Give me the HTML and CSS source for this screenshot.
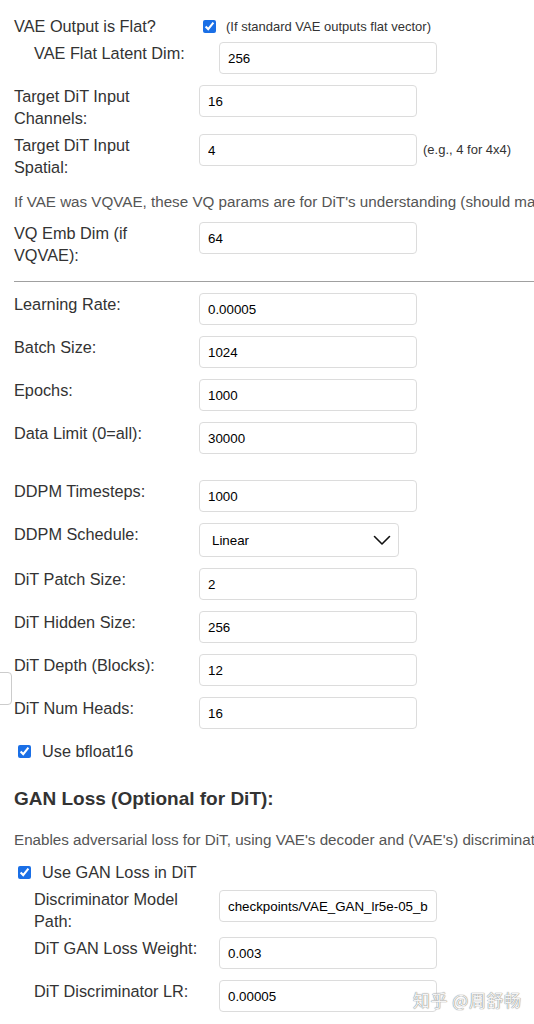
FILE: index.html
```html
<!DOCTYPE html>
<html>
<head>
<meta charset="utf-8">
<link rel="stylesheet" href="styles.css">
</head>
<body>
<div class="page">
  <div class="row check-row-top">
    <label class="lbl">VAE Output is Flat?</label>
    <div class="ctrl inline">
      <input type="checkbox" checked>
      <span class="note">(If standard VAE outputs flat vector)</span>
    </div>
  </div>
  <div class="indent">
    <div class="row">
      <label class="lbl">VAE Flat Latent Dim:</label>
      <input class="field" type="text" value="256">
    </div>
  </div>
  <div class="row">
    <label class="lbl">Target DiT Input Channels:</label>
    <input class="field" type="text" value="16">
  </div>
  <div class="row">
    <label class="lbl">Target DiT Input Spatial:</label>
    <input class="field" type="text" value="4">
    <span class="note side">(e.g., 4 for 4x4)</span>
  </div>
  <p class="hint">If VAE was VQVAE, these VQ params are for DiT's understanding (should match VAE's VQ config).</p>
  <div class="row">
    <label class="lbl">VQ Emb Dim (if VQVAE):</label>
    <input class="field" type="text" value="64">
  </div>
  <hr class="sep">
  <div class="row"><label class="lbl">Learning Rate:</label><input class="field" type="text" value="0.00005"></div>
  <div class="row"><label class="lbl">Batch Size:</label><input class="field" type="text" value="1024"></div>
  <div class="row"><label class="lbl">Epochs:</label><input class="field" type="text" value="1000"></div>
  <div class="row"><label class="lbl">Data Limit (0=all):</label><input class="field" type="text" value="30000"></div>
  <div class="group">
    <div class="row"><label class="lbl">DDPM Timesteps:</label><input class="field" type="text" value="1000"></div>
    <div class="row">
      <label class="lbl">DDPM Schedule:</label>
      <div class="select-wrap">
        <select class="sel"><option>Linear</option><option>Cosine</option></select>
        <svg class="chev" width="18" height="11" viewBox="0 0 18 11"><path d="M1.5 1.5 L9 9 L16.5 1.5" fill="none" stroke="#111" stroke-width="1.6" stroke-linecap="round" stroke-linejoin="round"/></svg>
      </div>
    </div>
    <div class="row"><label class="lbl">DiT Patch Size:</label><input class="field" type="text" value="2"></div>
    <div class="row"><label class="lbl">DiT Hidden Size:</label><input class="field" type="text" value="256"></div>
    <div class="row"><label class="lbl">DiT Depth (Blocks):</label><input class="field" type="text" value="12"></div>
    <div class="row"><label class="lbl">DiT Num Heads:</label><input class="field" type="text" value="16"></div>
    <div class="check-row"><input type="checkbox" checked><span class="check-text">Use bfloat16</span></div>
  </div>
  <h3 class="section">GAN Loss (Optional for DiT):</h3>
  <p class="hint hint2">Enables adversarial loss for DiT, using VAE's decoder and (VAE's) discriminator from checkpoint.</p>
  <div class="check-row"><input type="checkbox" checked><span class="check-text">Use GAN Loss in DiT</span></div>
  <div class="indent">
    <div class="row"><label class="lbl">Discriminator Model Path:</label><input class="field low" type="text" value="checkpoints/VAE_GAN_lr5e-05_bs64_best.pth"></div>
    <div class="row"><label class="lbl">DiT GAN Loss Weight:</label><input class="field" type="text" value="0.003"></div>
    <div class="row"><label class="lbl">DiT Discriminator LR:</label><input class="field" type="text" value="0.00005"></div>
  </div>
</div>
<div class="edge-tab"></div>
<div class="watermark">知乎 @周舒畅</div>
</body>
</html>
```

FILE: styles.css
```css
html, body {
  margin: 0;
  padding: 0;
  background: #fff;
  overflow: hidden;
}
body {
  font-family: "Liberation Sans", Arial, sans-serif;
  color: #333;
  position: relative;
  min-height: 1024px;
}
.page {
  width: 760px;
  padding: 15px 0 0 14px;
}
.row {
  display: flex;
  align-items: flex-start;
  margin-bottom: 5px;
}
.lbl {
  flex: 0 0 166px;
  margin-right: 19px;
  font-size: 16.3px;
  line-height: 22px;
  color: #333;
}
.field {
  box-sizing: border-box;
  width: 218px;
  height: 32px;
  margin: 0 0 6px 0;
  padding: 0 8px;
  border: 1px solid #dcdcdc;
  border-radius: 4px;
  font-family: "Liberation Sans", Arial, sans-serif;
  font-size: 13.33px;
  color: #000;
  background: #fff;
  outline: none;
}
.field.low {
  margin-top: 2px;
  margin-bottom: 4px;
}
.ctrl.inline {
  display: flex;
  align-items: center;
  height: 22px;
}
input[type="checkbox"] {
  width: 13px;
  height: 13px;
  margin: 3px 3px 3px 4px;
  accent-color: #1a6fe6;
}
.note {
  font-size: 13px;
  color: #333;
  margin-left: 7px;
}
.note.side {
  margin-left: 6px;
  line-height: 32px;
}
.indent {
  margin-left: 20px;
}
.hint {
  font-size: 15.2px;
  line-height: 20px;
  color: #555;
  margin: 14px 0 10px 0;
  white-space: nowrap;
}
.sep {
  margin: 15px 0 11px 0;
  border: 0;
  border-top: 1px solid #a0a0a0;
  height: 0;
}
.group {
  margin-top: 20px;
}
.select-wrap {
  position: relative;
  width: 200px;
  height: 34px;
  margin-bottom: 6px;
}
.sel {
  appearance: none;
  -webkit-appearance: none;
  box-sizing: border-box;
  width: 200px;
  height: 34px;
  padding: 0 12px;
  border: 1px solid #dcdcdc;
  border-radius: 4px;
  background: #fff;
  font-family: "Liberation Sans", Arial, sans-serif;
  font-size: 13.33px;
  color: #000;
}
.chev {
  position: absolute;
  right: 8px;
  top: 12px;
  pointer-events: none;
}
.check-row {
  display: flex;
  align-items: center;
  height: 22px;
  margin-bottom: 5px;
}
.check-text {
  font-size: 16.3px;
  line-height: 22px;
  margin-left: 8px;
  color: #333;
}
.section {
  font-size: 19px;
  line-height: 22px;
  font-weight: bold;
  color: #333;
  margin: 26px 0 20px 0;
}
.hint2 {
  margin: 0 0 11px 0;
}
.edge-tab {
  position: absolute;
  left: -10px;
  top: 672px;
  width: 20px;
  height: 31px;
  border: 1px solid #ccc;
  border-radius: 4px;
  background: #fff;
}
.watermark {
  position: absolute;
  left: 413px;
  top: 987px;
  font-family: "Noto Sans CJK SC", "Liberation Sans", sans-serif;
  font-size: 17px;
  color: #f4f4f4;
  text-shadow: 0 0 1px #777, 0 0 1px #999;
  letter-spacing: 0.5px;
}
```
